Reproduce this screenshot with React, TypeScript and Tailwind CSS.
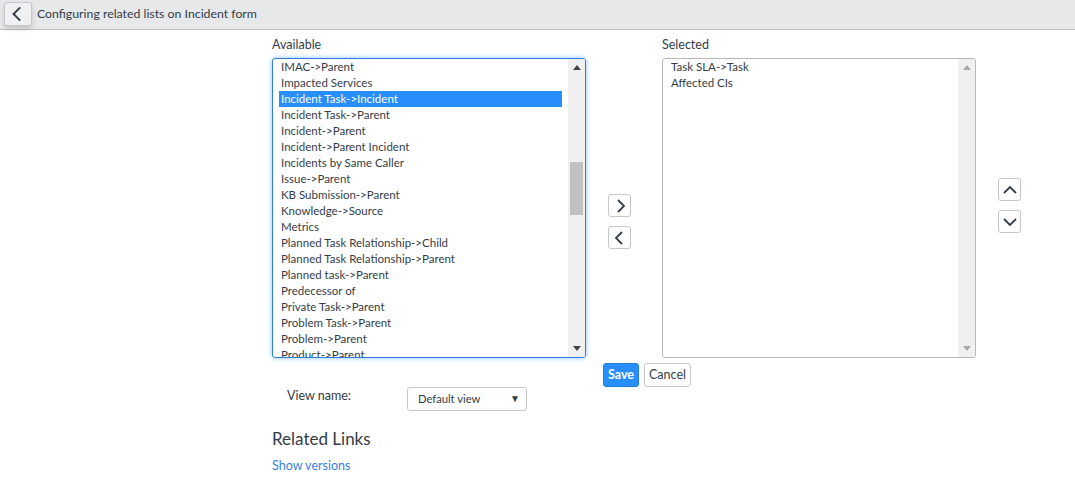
import React from "react"

const available = [
  "IMAC->Parent",
  "Impacted Services",
  "Incident Task->Incident",
  "Incident Task->Parent",
  "Incident->Parent",
  "Incident->Parent Incident",
  "Incidents by Same Caller",
  "Issue->Parent",
  "KB Submission->Parent",
  "Knowledge->Source",
  "Metrics",
  "Planned Task Relationship->Child",
  "Planned Task Relationship->Parent",
  "Planned task->Parent",
  "Predecessor of",
  "Private Task->Parent",
  "Problem Task->Parent",
  "Problem->Parent",
  "Product->Parent",
]

const selected = ["Task SLA->Task", "Affected CIs"]

function Chevron({ dir, className }: { dir: "left" | "right" | "up" | "down"; className?: string }) {
  const paths = {
    left: "M11 3 L5 9 L11 15",
    right: "M7 3 L13 9 L7 15",
    up: "M3 12 L9 6 L15 12",
    down: "M3 6 L9 12 L15 6",
  }
  return (
    <svg viewBox="0 0 18 18" className={className} fill="none" stroke="#343d47" strokeWidth="1.8">
      <path d={paths[dir]} />
    </svg>
  )
}

function IconButton({ dir }: { dir: "left" | "right" | "up" | "down" }) {
  return (
    <button className="w-[23px] h-[23px] flex items-center justify-center bg-white border border-[#c4c8cb] rounded-[3px]">
      <Chevron dir={dir} className="w-[18px] h-[18px]" />
    </button>
  )
}

function Scrollbar({ muted, thumb }: { muted?: boolean; thumb?: boolean }) {
  const arrow = muted ? "border-[#a9a9a9]" : "border-[#444444]"
  return (
    <div className="w-[17px] shrink-0 bg-[#f0f0f0] flex flex-col items-center justify-between py-[6px]">
      <div className={`w-0 h-0 border-x-[4px] border-x-transparent border-b-[5px] ${arrow}`} />
      {thumb && <div className="w-[13px] h-[53px] bg-[#c1c1c1] -mt-[39px]" />}
      <div className={`w-0 h-0 border-x-[4px] border-x-transparent border-t-[5px] ${arrow}`} />
    </div>
  )
}

export default function App() {
  return (
    <div className="w-[1075px] h-[499px] bg-white overflow-hidden text-[#343d47] text-[12.5px] font-['Lato','Noto_Sans',sans-serif]">
      {/* Header */}
      <div className="h-[30px] bg-[#e6e8ea] border-b border-[#bdc0c4] flex items-start pl-[4px] pt-[2px]">
        <button className="w-[28px] h-[24px] flex items-center justify-center bg-[#eff0f1] border border-[#c4c8cb] rounded-[3px] shadow-[0_3px_5px_rgba(0,0,0,0.15)]">
          <Chevron dir="left" className="w-[20px] h-[20px]" />
        </button>
        <div className="ml-[5px] text-[12.3px] leading-[24px]">Configuring related lists on Incident form</div>
      </div>

      <div className="pl-[272px] pt-[6px]">
        <div className="flex">
          {/* Available */}
          <div className="w-[314px]">
            <div className="h-[22px] leading-[17px]">Available</div>
            <div className="h-[300px] flex border border-[#2e7fd6] rounded-[3px] shadow-[0_0_5px_rgba(60,150,255,0.6)] overflow-hidden">
              <div className="flex-1 overflow-hidden pl-[6px] pr-[6px] text-[11.5px]">
                {available.map((item, i) => (
                  <div
                    key={item}
                    className={
                      i === 2
                        ? "h-[16px] leading-[16px] px-[2px] bg-[#278efc] text-white"
                        : "h-[16px] leading-[16px] px-[2px]"
                    }
                  >
                    {item}
                  </div>
                ))}
              </div>
              <Scrollbar thumb />
            </div>
          </div>

          {/* Move buttons */}
          <div className="w-[76px] pl-[22px] pt-[158px] flex flex-col gap-[9px]">
            <IconButton dir="right" />
            <IconButton dir="left" />
          </div>

          {/* Selected */}
          <div className="w-[314px]">
            <div className="h-[22px] leading-[17px]">Selected</div>
            <div className="h-[300px] flex border border-[#b8b8b8] rounded-[3px] overflow-hidden">
              <div className="flex-1 pl-[6px] pr-[7px] text-[11.5px]">
                {selected.map((item) => (
                  <div key={item} className="h-[16px] leading-[16px] px-[2px]">
                    {item}
                  </div>
                ))}
              </div>
              <Scrollbar muted />
            </div>
          </div>

          {/* Order buttons */}
          <div className="pl-[22px] pt-[142px] flex flex-col gap-[9px]">
            <IconButton dir="up" />
            <IconButton dir="down" />
          </div>
        </div>

        {/* Save / Cancel */}
        <div className="flex gap-[5px] pl-[331px] pt-[5px]">
          <button className="w-[36px] h-[24px] bg-[#278efc] border border-[#1f7fe0] rounded-[3px] text-white font-bold text-[12.5px]">
            Save
          </button>
          <button className="w-[47px] h-[24px] bg-white border border-[#c4c8cb] rounded-[3px] text-[12.5px]">
            Cancel
          </button>
        </div>

        {/* View name */}
        <div className="flex items-start pl-[15px] -mt-[3px]">
          <div className="w-[120px] leading-[24px]">View name:</div>
          <div className="w-[120px] h-[24px] mt-[3px] pl-[10px] pr-[6px] flex items-center justify-between border border-[#c4c8cb] rounded-[3px] text-[11.2px]">
            <span className="mt-[1px]">Default view</span>
            <span className="text-[10px] -mt-[2px]">▼</span>
          </div>
        </div>

        {/* Related links */}
        <div className="mt-[16px] text-[17px] leading-[24px]">Related Links</div>
        <div className="mt-[7px] leading-[16px] text-[#3b80e0]">Show versions</div>
      </div>
    </div>
  )
}
